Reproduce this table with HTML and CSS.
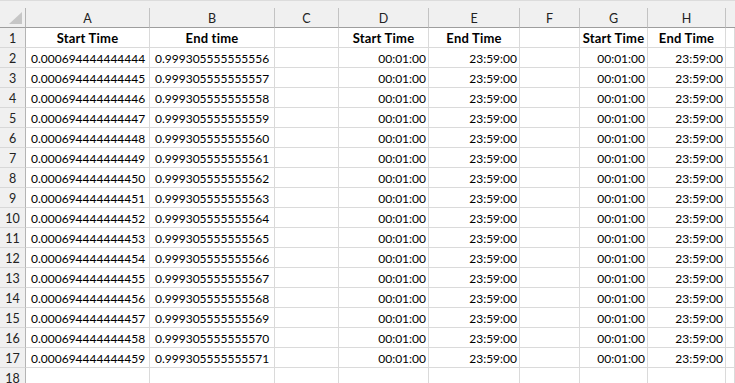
FILE: index.html
```html
<!DOCTYPE html>
<html>
<head>
<meta charset="utf-8">
<link rel="stylesheet" href="styles.css">
</head>
<body>
<div class="topbar"></div>
<div class="sheet">
  <div class="corner"><span class="tri"></span></div>
  <div class="ch">A</div><div class="ch">B</div><div class="ch">C</div><div class="ch">D</div><div class="ch">E</div><div class="ch">F</div><div class="ch">G</div><div class="ch">H</div><div class="ch last"></div>

  <div class="rh">1</div>
  <div class="c b ctr">Start Time</div><div class="c b ctr">End time</div><div class="c"></div><div class="c b ctr">Start Time</div><div class="c b ctr">End Time</div><div class="c"></div><div class="c b ctr">Start Time</div><div class="c b ctr">End Time</div><div class="c"></div>

  <div class="rh">2</div>
  <div class="c">0.000694444444444</div><div class="c">0.999305555555556</div><div class="c"></div><div class="c r">00:01:00</div><div class="c r">23:59:00</div><div class="c"></div><div class="c r">00:01:00</div><div class="c r">23:59:00</div><div class="c"></div>
  <div class="rh">3</div>
  <div class="c">0.000694444444445</div><div class="c">0.999305555555557</div><div class="c"></div><div class="c r">00:01:00</div><div class="c r">23:59:00</div><div class="c"></div><div class="c r">00:01:00</div><div class="c r">23:59:00</div><div class="c"></div>
  <div class="rh">4</div>
  <div class="c">0.000694444444446</div><div class="c">0.999305555555558</div><div class="c"></div><div class="c r">00:01:00</div><div class="c r">23:59:00</div><div class="c"></div><div class="c r">00:01:00</div><div class="c r">23:59:00</div><div class="c"></div>
  <div class="rh">5</div>
  <div class="c">0.000694444444447</div><div class="c">0.999305555555559</div><div class="c"></div><div class="c r">00:01:00</div><div class="c r">23:59:00</div><div class="c"></div><div class="c r">00:01:00</div><div class="c r">23:59:00</div><div class="c"></div>
  <div class="rh">6</div>
  <div class="c">0.000694444444448</div><div class="c">0.999305555555560</div><div class="c"></div><div class="c r">00:01:00</div><div class="c r">23:59:00</div><div class="c"></div><div class="c r">00:01:00</div><div class="c r">23:59:00</div><div class="c"></div>
  <div class="rh">7</div>
  <div class="c">0.000694444444449</div><div class="c">0.999305555555561</div><div class="c"></div><div class="c r">00:01:00</div><div class="c r">23:59:00</div><div class="c"></div><div class="c r">00:01:00</div><div class="c r">23:59:00</div><div class="c"></div>
  <div class="rh">8</div>
  <div class="c">0.000694444444450</div><div class="c">0.999305555555562</div><div class="c"></div><div class="c r">00:01:00</div><div class="c r">23:59:00</div><div class="c"></div><div class="c r">00:01:00</div><div class="c r">23:59:00</div><div class="c"></div>
  <div class="rh">9</div>
  <div class="c">0.000694444444451</div><div class="c">0.999305555555563</div><div class="c"></div><div class="c r">00:01:00</div><div class="c r">23:59:00</div><div class="c"></div><div class="c r">00:01:00</div><div class="c r">23:59:00</div><div class="c"></div>
  <div class="rh">10</div>
  <div class="c">0.000694444444452</div><div class="c">0.999305555555564</div><div class="c"></div><div class="c r">00:01:00</div><div class="c r">23:59:00</div><div class="c"></div><div class="c r">00:01:00</div><div class="c r">23:59:00</div><div class="c"></div>
  <div class="rh">11</div>
  <div class="c">0.000694444444453</div><div class="c">0.999305555555565</div><div class="c"></div><div class="c r">00:01:00</div><div class="c r">23:59:00</div><div class="c"></div><div class="c r">00:01:00</div><div class="c r">23:59:00</div><div class="c"></div>
  <div class="rh">12</div>
  <div class="c">0.000694444444454</div><div class="c">0.999305555555566</div><div class="c"></div><div class="c r">00:01:00</div><div class="c r">23:59:00</div><div class="c"></div><div class="c r">00:01:00</div><div class="c r">23:59:00</div><div class="c"></div>
  <div class="rh">13</div>
  <div class="c">0.000694444444455</div><div class="c">0.999305555555567</div><div class="c"></div><div class="c r">00:01:00</div><div class="c r">23:59:00</div><div class="c"></div><div class="c r">00:01:00</div><div class="c r">23:59:00</div><div class="c"></div>
  <div class="rh">14</div>
  <div class="c">0.000694444444456</div><div class="c">0.999305555555568</div><div class="c"></div><div class="c r">00:01:00</div><div class="c r">23:59:00</div><div class="c"></div><div class="c r">00:01:00</div><div class="c r">23:59:00</div><div class="c"></div>
  <div class="rh">15</div>
  <div class="c">0.000694444444457</div><div class="c">0.999305555555569</div><div class="c"></div><div class="c r">00:01:00</div><div class="c r">23:59:00</div><div class="c"></div><div class="c r">00:01:00</div><div class="c r">23:59:00</div><div class="c"></div>
  <div class="rh">16</div>
  <div class="c">0.000694444444458</div><div class="c">0.999305555555570</div><div class="c"></div><div class="c r">00:01:00</div><div class="c r">23:59:00</div><div class="c"></div><div class="c r">00:01:00</div><div class="c r">23:59:00</div><div class="c"></div>
  <div class="rh">17</div>
  <div class="c">0.000694444444459</div><div class="c">0.999305555555571</div><div class="c"></div><div class="c r">00:01:00</div><div class="c r">23:59:00</div><div class="c"></div><div class="c r">00:01:00</div><div class="c r">23:59:00</div><div class="c"></div>
  <div class="rh">18</div>
  <div class="c"></div><div class="c"></div><div class="c"></div><div class="c"></div><div class="c"></div><div class="c"></div><div class="c"></div><div class="c"></div><div class="c"></div>
</div>
</body>
</html>
```
FILE: styles.css
```css
html, body {
  margin: 0;
  padding: 0;
  background: #ffffff;
  overflow: hidden;
}
body {
  width: 735px;
  height: 383px;
  font-family: Lato, "Open Sans", sans-serif;
  font-size: 12px;
  color: #000;
}
.topbar {
  height: 8px;
  background: #f0f0f0;
  border-top: 1px solid #dcdcdc;
  box-sizing: border-box;
}
.sheet {
  display: grid;
  grid-template-columns: 26px 124px 125px 64px 90px 91px 60px 68px 78px 1fr;
  grid-auto-rows: 20px;
}
.sheet > div {
  box-sizing: border-box;
  border-right: 1px solid #dadada;
  border-bottom: 1px solid #dadada;
  display: flex;
  align-items: center;
  white-space: nowrap;
  overflow: hidden;
  line-height: 19px;
}
.corner {
  background: #f0f0f0;
  position: relative;
  border-right: 1px solid #b4b4b4 !important;
  border-bottom: 1px solid #9e9e9e !important;
}
.tri {
  position: absolute;
  right: 3px;
  bottom: 3px;
  width: 0;
  height: 0;
  border-left: 13px solid transparent;
  border-bottom: 12px solid #c6c6c6;
}
.ch {
  background: #f0f0f0;
  justify-content: center;
  color: #222;
  font-size: 12.5px;
  border-right: 1px solid #c3c3c3 !important;
  border-bottom: 1px solid #9e9e9e !important;
  padding-top: 1px;
}
.ch.last {
  border-right: none !important;
}
.rh {
  background: #f0f0f0;
  justify-content: center;
  color: #222;
  font-size: 12.5px;
  border-right: 1px solid #b4b4b4 !important;
  border-bottom: 1px solid #d8d8d8 !important;
  padding-top: 1px;
}
.c {
  padding: 1px 3px 0 5px;
}
.c.r {
  justify-content: flex-end;
  padding-right: 2px;
}
.c.ctr {
  justify-content: center;
  padding-left: 0;
  padding-right: 0;
}
.c.b {
  font-weight: bold;
  font-size: 13px;
  letter-spacing: 0.2px;
}
```
